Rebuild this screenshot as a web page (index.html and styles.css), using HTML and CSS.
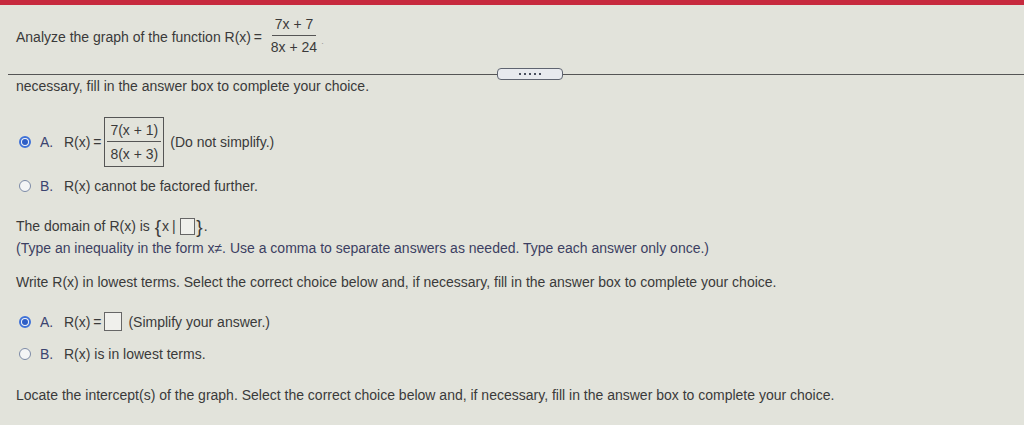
FILE: index.html
```html
<!DOCTYPE html>
<html>
<head>
<meta charset="utf-8">
<link rel="stylesheet" href="styles.css">
</head>
<body>
<div class="topbar"></div>
<div class="page">
  <div class="head">
    <span class="lead">Analyze the graph of the function R(x)&thinsp;=&thinsp;</span>
    <span class="frac">
      <span class="num">7x + 7</span>
      <span class="den">8x + 24</span>
    </span>
    <span class="dot">.</span>
  </div>
  <div class="divider">
    <div class="line"></div>
    <div class="more"><span class="d"></span><span class="d"></span><span class="d"></span><span class="d"></span><span class="d"></span></div>
    <div class="line grow"></div>
  </div>
  <div class="content">
    <p class="t1">necessary, fill in the answer box to complete your choice.</p>

    <div class="opt optA1">
      <span class="radio on"></span>
      <span class="letter">A.</span>
      <span class="rx">R(x)&thinsp;=</span>
      <span class="fbox">
        <span class="num">7(x + 1)</span>
        <span class="den">8(x + 3)</span>
      </span>
      <span class="note">(Do not simplify.)</span>
    </div>
    <div class="opt optB1">
      <span class="radio"></span>
      <span class="letter">B.</span>
      <span class="rx">R(x) cannot be factored further.</span>
    </div>

    <p class="t2">The domain of R(x) is&nbsp;<span class="brace">{</span>x&thinsp;|&thinsp;<span class="ibox"></span><span class="brace">}</span>.</p>
    <p class="t3 hint">(Type an inequality in the form x&#8800;. Use a comma to separate answers as needed. Type each answer only once.)</p>
    <p class="t4">Write R(x) in lowest terms. Select the correct choice below and, if necessary, fill in the answer box to complete your choice.</p>

    <div class="opt optA2">
      <span class="radio on"></span>
      <span class="letter">A.</span>
      <span class="rx">R(x)&thinsp;=</span><span class="ibox2"></span>
      <span class="note">(Simplify your answer.)</span>
    </div>
    <div class="opt optB2">
      <span class="radio"></span>
      <span class="letter">B.</span>
      <span class="rx">R(x) is in lowest terms.</span>
    </div>

    <p class="t5">Locate the intercept(s) of the graph. Select the correct choice below and, if necessary, fill in the answer box to complete your choice.</p>
  </div>
</div>
</body>
</html>
```
FILE: styles.css
```css
html, body {
  margin: 0;
  padding: 0;
}
body {
  width: 1024px;
  height: 425px;
  overflow: hidden;
  background: #e2e3db;
  font-family: "Liberation Sans", Arial, sans-serif;
  font-size: 14px;
  line-height: 16px;
  color: #3a3a3a;
}
.topbar {
  height: 5px;
  background: #c72a3e;
}
.page {
  display: flex;
  flex-direction: column;
}
.head {
  display: flex;
  align-items: center;
  padding: 10px 0 0 16px;
  height: 40px;
  box-sizing: content-box;
}
.lead {
  padding-top: 4px;
}
.frac {
  display: inline-flex;
  flex-direction: column;
  align-items: center;
  margin-left: 3px;
}
.frac .num {
  padding: 0 3px 3px;
  border-bottom: 1px solid #555;
}
.frac .den {
  padding: 3px 3px 0;
}
.dot {
  font-size: 9px;
  color: #999;
  align-self: center;
  margin: 12px 0 0 1px;
}
.divider {
  display: flex;
  align-items: center;
  margin-top: 13px;
  margin-left: 8px;
  height: 12px;
}
.line {
  width: 489px;
  height: 1px;
  background: #555;
}
.line.grow {
  flex: 1;
  width: auto;
}
.more {
  width: 64px;
  height: 10px;
  border: 1px solid #5f6470;
  border-radius: 4px;
  background: #e8eaee;
  display: flex;
  align-items: center;
  justify-content: center;
  gap: 3px;
}
.more .d {
  width: 2px;
  height: 2px;
  background: #4a505e;
}
.content {
  padding-left: 16px;
}
p {
  margin: 0;
}
.t1 {
  margin-top: -2px;
}
.opt {
  display: flex;
  align-items: center;
  padding-left: 3px;
}
.radio {
  width: 12px;
  height: 12px;
  border: 1px solid #7c8aa6;
  border-radius: 50%;
  background: #f4f5f6;
  box-sizing: border-box;
  margin-right: 9px;
  position: relative;
}
.radio.on {
  border: 2px solid #3f72d8;
}
.radio.on::after {
  content: "";
  position: absolute;
  left: 1px;
  top: 1px;
  width: 6px;
  height: 6px;
  border-radius: 50%;
  background: #2f5fc6;
}
.letter {
  color: #3b4470;
  width: 24px;
}
.optA1 {
  margin-top: 23px;
}
.fbox {
  display: inline-flex;
  flex-direction: column;
  align-items: center;
  border: 1px solid #555;
  padding: 4px 2px 4px;
  margin-left: 3px;
}
.fbox .num {
  padding: 0 3px 3px;
  border-bottom: 1px solid #555;
}
.fbox .den {
  padding: 4px 3px 0;
}
.note {
  margin-left: 6px;
}
.optB1 {
  margin-top: 11px;
}
.t2 {
  margin-top: 23px;
  display: flex;
  align-items: center;
  height: 18px;
}
.brace {
  font-size: 19px;
  margin: 0 1px;
  line-height: 17px;
}
.ibox {
  display: inline-block;
  width: 13px;
  height: 15px;
  border: 1px solid #666;
  background: #f0f0ec;
  margin-left: 2px;
}
.hint {
  color: #3c3f62;
}
.t3 {
  margin-top: 5px;
}
.t4 {
  margin-top: 18px;
}
.optA2 {
  margin-top: 22px;
}
.ibox2 {
  display: inline-block;
  width: 16px;
  height: 17px;
  border: 1px solid #666;
  background: #f0f0ec;
  margin-left: 3px;
}
.optB2 {
  margin-top: 15px;
}
.t5 {
  margin-top: 25px;
}
```
